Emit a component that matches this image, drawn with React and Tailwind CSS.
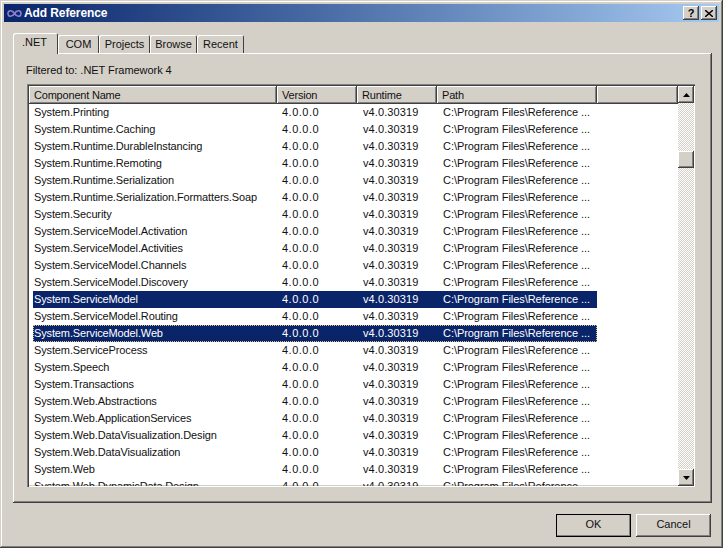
import React from 'react';

const names = [
  'System.Printing',
  'System.Runtime.Caching',
  'System.Runtime.DurableInstancing',
  'System.Runtime.Remoting',
  'System.Runtime.Serialization',
  'System.Runtime.Serialization.Formatters.Soap',
  'System.Security',
  'System.ServiceModel.Activation',
  'System.ServiceModel.Activities',
  'System.ServiceModel.Channels',
  'System.ServiceModel.Discovery',
  'System.ServiceModel',
  'System.ServiceModel.Routing',
  'System.ServiceModel.Web',
  'System.ServiceProcess',
  'System.Speech',
  'System.Transactions',
  'System.Web.Abstractions',
  'System.Web.ApplicationServices',
  'System.Web.DataVisualization.Design',
  'System.Web.DataVisualization',
  'System.Web',
  'System.Web.DynamicData.Design',
];

const selected = ['System.ServiceModel', 'System.ServiceModel.Web'];
const tabs = ['COM', 'Projects', 'Browse', 'Recent'];
const tabWidths = { COM: 'w-[41px]', Projects: 'w-[51px]', Browse: 'w-[47px]', Recent: 'w-[47px]' };
const raised = 'bg-[#d4d0c8] shadow-[inset_-1px_-1px_0_#404040,inset_1px_1px_0_#fff,inset_-2px_-2px_0_#808080]';

const Row = ({ name }) => {
  const on = selected.includes(name);
  const focused = name === 'System.ServiceModel.Web';
  return (
    <div className={`flex h-[17px] w-[564px] items-center shrink-0 ${on ? 'bg-[#0a246a] text-white' : 'text-[#111]'} ${focused ? 'outline outline-1 -outline-offset-1 outline-dotted outline-[#d8c080]' : ''}`}>
      <span className="w-[244px] pl-[1px] whitespace-nowrap tracking-[-0.13px]">{name}</span>
      <span className="w-[80px] pl-[5px] tracking-[0.5px]">4.0.0.0</span>
      <span className="w-[80px] pl-[6px] tracking-[0.1px]">v4.0.30319</span>
      <span className="w-[157px] pl-[6px] whitespace-nowrap tracking-[-0.05px]">C:\Program Files\Reference ...</span>
    </div>
  );
};

const HeaderCell = ({ label, width }) => (
  <div className={`${width} h-full flex items-center pl-[5px] shrink-0 tracking-[-0.2px] ${raised}`}>{label}</div>
);

const ScrollButton = ({ up }) => (
  <div className={`w-[16px] h-[17px] shrink-0 flex items-center justify-center ${raised}`}>
    <svg width="7" height="4" viewBox="0 0 7 4">
      <path d={up ? 'M3.5 0 L7 4 L0 4 Z' : 'M0 0 L7 0 L3.5 4 Z'} fill="#000" />
    </svg>
  </div>
);

const Button = ({ label, primary }) => (
  <button className={`w-[75px] h-[23px] pb-[2px] text-[#111] ${raised} ${primary ? 'outline outline-1 outline-black -outline-offset-1' : ''}`}>
    {label}
  </button>
);

export default function App() {
  return (
    <div className="w-[723px] h-[548px] p-[4px] flex flex-col bg-[#d4d0c8] shadow-[inset_-1px_-1px_0_#404040,inset_1px_1px_0_#d4d0c8,inset_-2px_-2px_0_#808080,inset_2px_2px_0_#fff] font-['Liberation_Sans',sans-serif] text-[11px] overflow-hidden">
      <div className="h-[18px] shrink-0 flex items-center pl-[3px] pr-[2px] bg-gradient-to-r from-[#0a246a] to-[#a6caf0]">
        <svg width="15" height="9" viewBox="0 0 15 9" fill="none" stroke="#8f7fd0" strokeWidth="1.6">
          <path d="M7.5 4.5 C5.5 1 1 0.5 1 4.5 C1 8.5 5.5 8 7.5 4.5 C9.5 1 14 0.5 14 4.5 C14 8.5 9.5 8 7.5 4.5 Z" />
        </svg>
        <span className="ml-[2px] text-white font-bold text-[12px] tracking-[-0.1px]">Add Reference</span>
        <div className="ml-auto flex">
          <div className={`w-[16px] h-[14px] mr-[2px] flex items-center justify-center text-black font-bold text-[11px] ${raised}`}>?</div>
          <div className={`w-[16px] h-[14px] flex items-center justify-center ${raised}`}>
            <svg width="8" height="7" viewBox="0 0 8 7" stroke="#000" strokeWidth="1.4"><path d="M0 0 L8 7 M8 0 L0 7" /></svg>
          </div>
        </div>
      </div>

      <div className="flex-1 flex flex-col pl-[9px] pr-[7px]">
        <div className="flex items-end h-[31px] shrink-0 text-[#111]">
          <div className="w-[45px] h-[21px] pb-[2px] pr-[2px] flex items-center justify-center bg-[#d4d0c8] relative top-[1px] z-10 rounded-t-[2px] shadow-[inset_1px_1px_0_#fff,inset_-1px_0_0_#404040]">.NET</div>
          {tabs.map((t) => (
            <div key={t} className={`${tabWidths[t]} h-[18px] flex items-center justify-center rounded-t-[2px] shadow-[inset_1px_1px_0_#fff,inset_-1px_0_0_#404040]`}>{t}</div>
          ))}
        </div>

        <div className="h-[450px] shrink-0 px-[14px] shadow-[inset_-1px_-1px_0_#404040,inset_1px_1px_0_#fff,inset_-2px_-2px_0_#808080]">
          <div className="h-[31px] pt-[9px] -ml-[1px] text-[#111] tracking-[-0.05px]">Filtered to: .NET Framework 4</div>
          <div className="w-[668px] h-[403px] pt-[2px] pl-[2px] pr-[1px] pb-[1px] bg-white shadow-[inset_1px_1px_0_#808080,inset_2px_2px_0_#404040,inset_-1px_-1px_0_#fff,inset_-2px_-2px_0_#d4d0c8] flex">
            <div className="flex-1 min-w-0 flex flex-col overflow-hidden">
              <div className="h-[18px] flex shrink-0 text-[#111]">
                <HeaderCell label="Component Name" width="w-[248px]" />
                <HeaderCell label="Version" width="w-[80px]" />
                <HeaderCell label="Runtime" width="w-[80px]" />
                <HeaderCell label="Path" width="w-[160px]" />
                <HeaderCell label="" width="flex-1" />
              </div>
              <div className="flex-1 flex flex-col overflow-hidden pl-[4px]">
                {names.map((n) => <Row key={n} name={n} />)}
              </div>
            </div>
            <div className="w-[16px] shrink-0 flex flex-col bg-[repeating-conic-gradient(#d4d0c8_0_25%,#fff_0_50%)] bg-[length:2px_2px]">
              <ScrollButton up />
              <div className="h-[48px] shrink-0" />
              <div className={`h-[17px] shrink-0 ${raised}`} />
              <div className="flex-1" />
              <ScrollButton />
            </div>
          </div>
        </div>

        <div className="flex justify-end gap-[5px] pt-[11px] pr-[1px]">
          <Button label="OK" primary />
          <Button label="Cancel" />
        </div>
      </div>
    </div>
  );
}
